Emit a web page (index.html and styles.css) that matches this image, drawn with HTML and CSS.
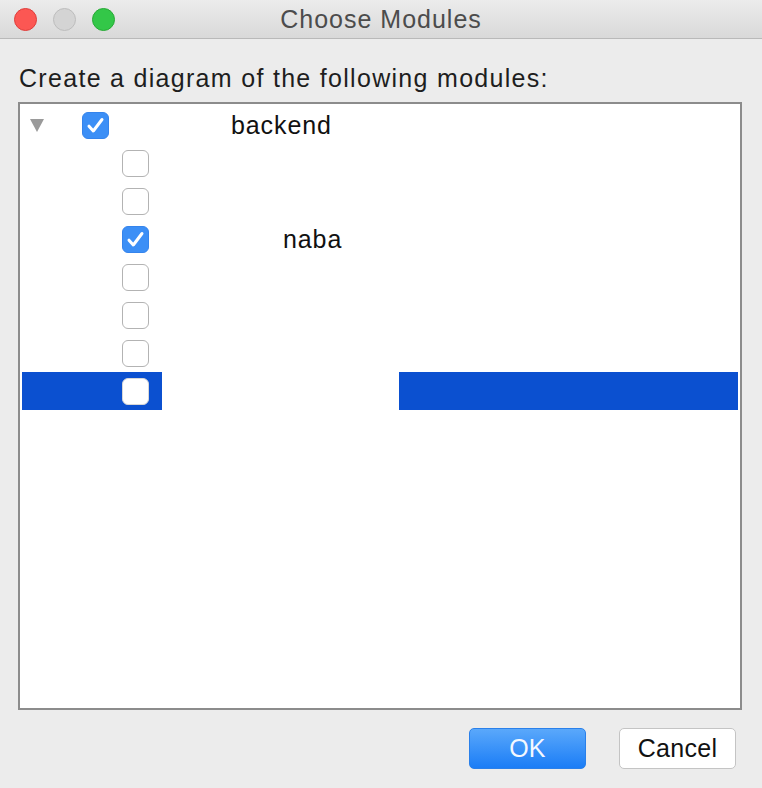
FILE: index.html
```html
<!DOCTYPE html>
<html>
<head>
<meta charset="utf-8">
<link rel="stylesheet" href="styles.css">
</head>
<body>
<div class="window">
  <div class="titlebar">
    <div class="lights">
      <span class="light red"></span>
      <span class="light grey"></span>
      <span class="light green"></span>
    </div>
    <div class="title">Choose Modules</div>
  </div>
  <div class="content">
    <div class="label">Create a diagram of the following modules:</div>
    <div class="list">
      <div class="row">
        <span class="twisty"></span>
        <span class="cb checked"><svg viewBox="0 0 27 27"><path d="M7 14.2 L11.3 19 L20 7.5" fill="none" stroke="#fff" stroke-width="3" stroke-linecap="round" stroke-linejoin="round"/></svg></span>
        <span class="name root">backend</span>
      </div>
      <div class="row child"><span class="cb"></span></div>
      <div class="row child"><span class="cb"></span></div>
      <div class="row child">
        <span class="cb checked"><svg viewBox="0 0 27 27"><path d="M7 14.2 L11.3 19 L20 7.5" fill="none" stroke="#fff" stroke-width="3" stroke-linecap="round" stroke-linejoin="round"/></svg></span>
        <span class="name naba">naba</span>
      </div>
      <div class="row child"><span class="cb"></span></div>
      <div class="row child"><span class="cb"></span></div>
      <div class="row child"><span class="cb"></span></div>
      <div class="row child selected">
        <span class="cb white"></span>
        <span class="redact"></span>
      </div>
    </div>
    <div class="buttons">
      <button class="btn ok">OK</button>
      <button class="btn cancel">Cancel</button>
    </div>
  </div>
</div>
</body>
</html>
```
FILE: styles.css
```css
html, body {
  margin: 0;
  padding: 0;
  background: #ececec;
}
body {
  font-family: "Liberation Sans", Arial, sans-serif;
  color: #1a1a1a;
}
.window {
  width: 762px;
  height: 788px;
  display: flex;
  flex-direction: column;
  background: #ececec;
}
.titlebar {
  height: 38px;
  flex: none;
  display: flex;
  align-items: center;
  background: linear-gradient(#ececec, #d9d9d9);
  border-bottom: 1px solid #b9b9b9;
  position: relative;
}
.lights {
  display: flex;
  gap: 16px;
  padding-left: 14px;
}
.light {
  width: 23px;
  height: 23px;
  border-radius: 50%;
  box-sizing: border-box;
}
.light.red { background: #fc5753; border: 1px solid #df3d3a; }
.light.grey { background: #d4d4d4; border: 1px solid #bdbdbd; }
.light.green { background: #33c748; border: 1px solid #27aa35; }
.title {
  position: absolute;
  left: 0;
  right: 0;
  top: 0;
  height: 38px;
  line-height: 38px;
  text-align: center;
  font-size: 25px;
  letter-spacing: 1px;
  color: #4c4c4c;
  pointer-events: none;
}
.content {
  flex: 1;
  display: flex;
  flex-direction: column;
  padding: 0 20px 0 18px;
}
.label {
  font-size: 25px;
  letter-spacing: 1.3px;
  margin-top: 23px;
  padding-left: 1px;
  height: 40px;
  line-height: 32px;
  color: #1e1e1e;
}
.list {
  height: 608px;
  box-sizing: border-box;
  border: 2px solid #8c8c8c;
  background: #fff;
  padding: 2px 2px 0 2px;
  display: flex;
  flex-direction: column;
}
.row {
  height: 38px;
  flex: none;
  display: flex;
  align-items: center;
}
.twisty {
  width: 0;
  height: 0;
  margin-left: 8px;
  border-left: 7px solid transparent;
  border-right: 7px solid transparent;
  border-top: 13px solid #9a9a9a;
  margin-top: 1px;
}
.row > .twisty + .cb { margin-left: 38px; }
.child .cb { margin-left: 100px; }
.cb {
  width: 27px;
  height: 27px;
  box-sizing: border-box;
  border: 1px solid #b3b3b3;
  border-radius: 6px;
  background: #fff;
  flex: none;
  display: flex;
  align-items: center;
  justify-content: center;
}
.cb svg { width: 27px; height: 27px; display: block; flex: none; }
.cb.checked {
  background: #3c8ff6;
  border-color: #3584ec;
}
.cb.white {
  border-color: #d7d7d7;
}
.name {
  font-size: 25px;
  letter-spacing: 0.9px;
  color: #111;
}
.name.root { margin-left: 122px; }
.name.naba { margin-left: 134px; }
.selected {
  background: #0b50d0;
}
.redact {
  width: 237px;
  height: 38px;
  background: #fff;
  margin-left: 13px;
}
.buttons {
  display: flex;
  justify-content: flex-end;
  gap: 33px;
  margin-top: 18px;
  padding-right: 6px;
}
.btn {
  font-family: "Liberation Sans", Arial, sans-serif;
  font-size: 25px;
  letter-spacing: 0.3px;
  height: 41px;
  border-radius: 5px;
  padding: 0;
}
.ok {
  width: 117px;
  color: #f4f8ff;
  background: linear-gradient(#5aa8fb, #1b7df6);
  border: 1px solid #2a80ea;
}
.cancel {
  width: 117px;
  color: #111;
  background: #fff;
  border: 1px solid #c4c4c4;
}
```
